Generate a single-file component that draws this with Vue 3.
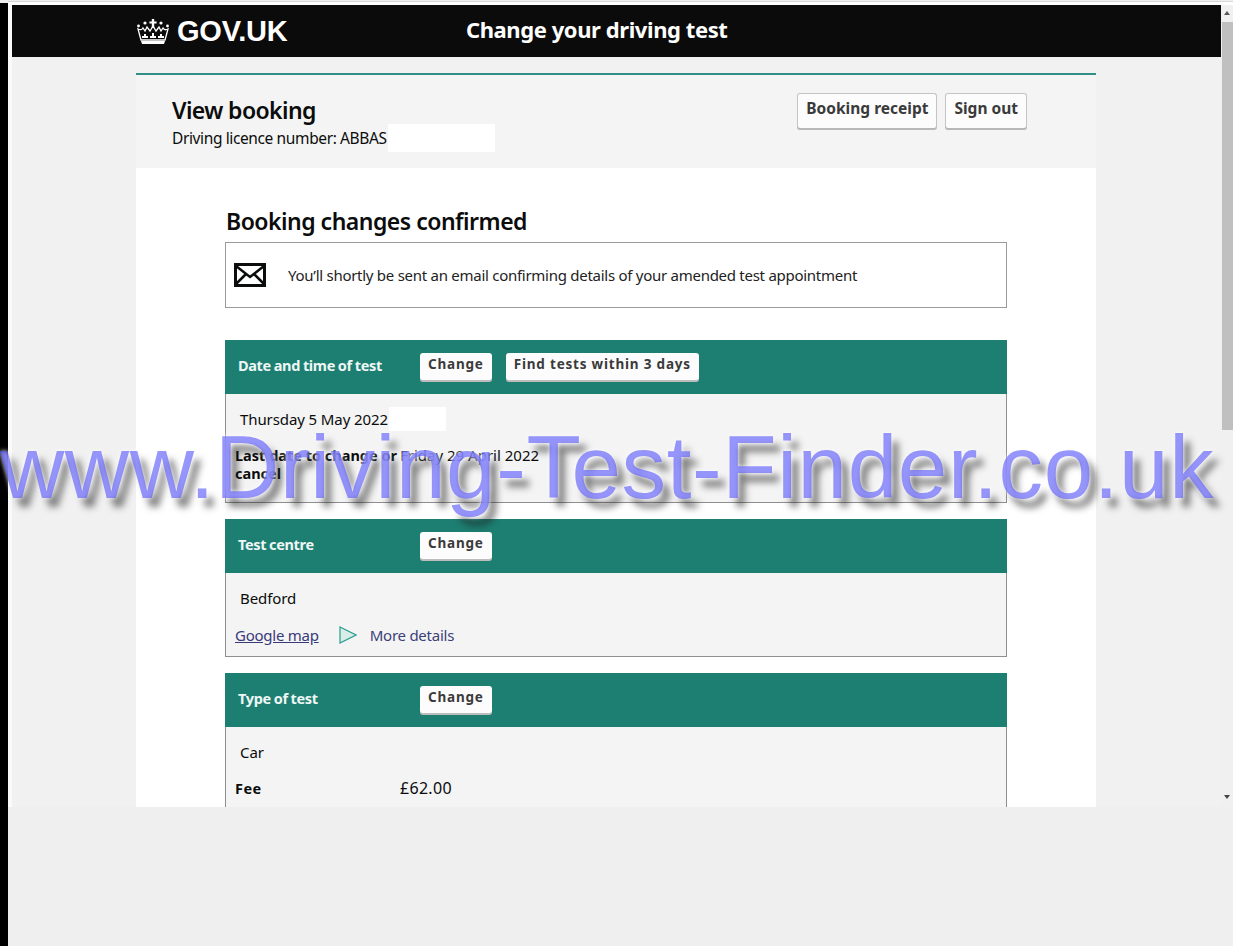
<template>
  <div class="screen">
    <div class="edge"></div>
    <div class="desk">
      <div class="window">
        <div class="page">
          <header class="topbar">
            <div class="brand">
              <svg class="crown" viewBox="0 0 34 26" width="34" height="26">
                <path d="M5 22 2 11c2 1 4 1 5-1l2 3 2-4 3 4 3-5 3 5 3-4 2 4 2-3c1 2 3 2 5 1l-3 11z" fill="none" stroke="#fff" stroke-width="1.3" />
                <path d="M5 23h24l-1 3H6z" fill="#fff" />
                <path d="M15.8 1h2.4v2.4h2.4v2.2h-2.4V10h-2.4V5.600h-2.400V3.400h2.400z" fill="#fff" />
                <path d="M8 16h2v2h2v2H6v-2h2zM16 15h2v3h2v2h-6v-2h2zM24 16h2v2h2v2h-6v-2h2z" fill="#fff" />
                <circle cx="9" cy="5" r="1.600" fill="#fff" />
                <circle cx="25" cy="5" r="1.600" fill="#fff" />
                <circle cx="2.500" cy="8" r="1.400" fill="#fff" />
                <circle cx="31.500" cy="8" r="1.400" fill="#fff" />
              </svg>
              <span class="logotype">GOV.UK</span>
            </div>
            <div class="service">Change your driving test</div>
          </header>

          <main class="wrap">
            <section class="summary">
              <div>
                <h1>View booking</h1>
                <div class="licence">Driving licence number: ABBAS<span class="mask mask-licence"></span></div>
              </div>
              <div class="actions">
                <button class="btn btn-big">Booking receipt</button>
                <button class="btn btn-big">Sign out</button>
              </div>
            </section>

            <section class="content">
              <h2>Booking changes confirmed</h2>
              <div class="notice">
                <svg class="mail" viewBox="0 0 32 24" width="32" height="24">
                  <rect x="1.500" y="1.500" width="29" height="21" fill="#fff" stroke="#0b0c0c" stroke-width="3" />
                  <path d="M2 3 16 14 30 3M2 21 12 11M30 21 20 11" fill="none" stroke="#0b0c0c" stroke-width="2.500" />
                </svg>
                <p>You’ll shortly be sent an email confirming details of your amended test appointment</p>
              </div>

              <div class="panel">
                <div class="panel-head">
                  <span class="panel-title">Date and time of test</span>
                  <button class="btn">Change</button>
                  <button class="btn">Find tests within 3 days</button>
                </div>
                <div class="panel-body">
                  <div class="value">Thursday 5 May 2022<span class="mask mask-time"></span></div>
                  <div class="row row-cancel">
                    <b>Last date to change or cancel</b>
                    <span>Friday 29 April 2022</span>
                  </div>
                </div>
              </div>

              <div class="panel">
                <div class="panel-head">
                  <span class="panel-title">Test centre</span>
                  <button class="btn">Change</button>
                </div>
                <div class="panel-body">
                  <div class="value">Bedford</div>
                  <div class="links">
                    <a class="map-link">Google map</a>
                    <svg class="arrow" viewBox="0 0 18 18" width="18" height="18">
                      <path d="M1 1 17 9 1 17z" fill="#d8ece8" stroke="#2a9d8f" stroke-width="1.200" />
                    </svg>
                    <span class="more">More details</span>
                  </div>
                </div>
              </div>

              <div class="panel">
                <div class="panel-head">
                  <span class="panel-title">Type of test</span>
                  <button class="btn">Change</button>
                </div>
                <div class="panel-body">
                  <div class="value">Car</div>
                  <div class="row row-fee">
                    <b>Fee</b>
                    <span>£62.00</span>
                  </div>
                </div>
              </div>
            </section>
          </main>
        </div>

        <div class="scrollbar">
          <span class="tri tri-up"></span>
          <div class="thumb"></div>
          <span class="tri tri-down"></span>
        </div>
      </div>
    </div>
    <div class="watermark">www.Driving-Test-Finder.co.uk</div>
  </div>
</template>

<script setup>
</script>

<style>
html, body { margin: 0; background: #efefef; overflow: hidden; }
</style>

<style scoped>
.screen {
  position: relative; display: flex; width: 1233px; height: 946px;
  overflow: hidden; background: #efefef;
  font-family: "Noto Sans", "Open Sans", sans-serif; color: #0b0c0c;
}
.edge { width: 8px; background: #000; margin-top: 3px; }
.desk { flex: 1; }
.window {
  display: flex; box-sizing: border-box; height: 806px; margin-top: 1px; padding-top: 3px;
  background: #fff; border-top: 1px solid #d8d8d8;
}
.page { flex: 1; min-width: 0; border-left: 4px solid #fafafa; background: #f1f1f1; overflow: hidden; }

.topbar { display: flex; align-items: center; height: 52px; padding-left: 124px; background: #0b0b0b; color: #fff; }
.brand { display: flex; align-items: center; width: 330px; }
.crown { margin-right: 7px; }
.logotype { font: 700 29px/1 "Liberation Sans", Arial, sans-serif; letter-spacing: -0.2px; }
.service { font: 700 22px/1 "Noto Sans", sans-serif; letter-spacing: -0.42px; margin-top: -5px; }

.wrap { width: 960px; margin: 16px 0 0 124px; }
.summary {
  display: flex; justify-content: space-between; height: 93px;
  border-top: 2px solid #2f8f88; background: #f4f4f4; padding-left: 36px; padding-right: 69px;
}
h1 { margin: 21px 0 0; font-size: 23px; line-height: 28px; font-weight: 600; letter-spacing: -0.6px; }
.licence { display: flex; font-size: 15.500px; line-height: 28px; letter-spacing: -0.38px; }
.mask { display: inline-block; background: #fff; }
.mask-licence { width: 107px; height: 28px; margin-left: 1px; }
.actions { display: flex; gap: 8px; margin-top: 18px; align-items: flex-start; }

.btn {
  height: 34px; padding: 0 8px; border: 0; border-radius: 3px; background: #fcfcfc;
  box-shadow: 0 2px 0 #bdbdbd; font: 700 13.500px/1 "Noto Sans", sans-serif;
  color: #3a3a3a; letter-spacing: 0.8px;
}
.btn-big {
  height: 35px; padding: 0 8px 5px; border: 1px solid #c4c4c4; border-bottom: 0;
  font-size: 15.500px; letter-spacing: 0;
  box-shadow: 0 2px 0 #b8b8b8;
}

.content { background: #fff; padding: 40px 89px 0; height: 640px; }
h2 { margin: -1px 0 7px 1px; font-size: 23px; line-height: 28px; font-weight: 600; letter-spacing: -0.5px; }
.notice { display: flex; align-items: center; height: 66px; box-sizing: border-box; border: 1px solid #9a9a9a; padding-left: 8px; margin-bottom: 32px; }
.mail { margin-right: 22px; }
.notice p { margin: 0; font-size: 15px; color: #222; letter-spacing: -0.27px; }

.panel { margin-bottom: 16px; }
.panel-head { display: flex; align-items: center; height: 54px; background: #1d7f72; padding-left: 13px; gap: 14px; }
.panel-title { width: 168px; margin-top: -4px; font-size: 14.500px; font-weight: 700; color: #eef7f5; letter-spacing: -0.35px; word-spacing: -0.5px; }
.panel-head .btn { height: 27px; padding: 0 8px 2px; margin-top: -2px; font-size: 13.500px; }
.panel-body { border: 1px solid #8f8f8f; border-top: 0; background: #f4f4f4; padding: 0 9px; }
.value { display: flex; align-items: center; height: 24px; padding: 13px 0 0 5px; font-size: 15px; letter-spacing: -0.1px; }
.mask-time { width: 57px; height: 24px; margin-left: 1px; }

.row { display: flex; font-size: 15px; line-height: 18px; }
.row b { width: 165px; flex: none; font-size: 14.500px; }
.row-cancel { padding-top: 15px; height: 56px; }
.row-fee { padding-top: 15px; height: 60px; }
.row-fee b { letter-spacing: 0.5px; }
.row-fee span { font-size: 16px; letter-spacing: 0.3px; }

.links { display: flex; align-items: center; padding: 15px 0 11px; height: 20px; font-size: 15px; letter-spacing: -0.25px; }
.map-link { color: #3a3a7a; text-decoration: underline; }
.arrow { margin: 0 13px 0 20px; }
.more { color: #3b3f78; }

.scrollbar { position: relative; width: 12px; background: #f0f0f0; }
.thumb { position: absolute; top: 17px; left: 1px; right: 0; height: 408px; background: #c0c0c0; }
.tri { position: absolute; left: 3px; width: 0; height: 0; border-left: 3px solid transparent; border-right: 3px solid transparent; }
.tri-up { top: 6px; border-bottom: 4px solid #555; }
.tri-down { bottom: 8px; border-top: 4px solid #444; }

.watermark {
  position: absolute; top: 423px; left: 0; white-space: nowrap;
  font: 400 89px/1 "Liberation Sans", Arial, sans-serif; letter-spacing: 0.6px;
  color: rgba(80, 80, 250, 0.6);
  text-shadow: 0 0 4px rgba(255,255,255,0.85), 7px 9px 7px rgba(30, 30, 30, 0.55);
}
</style>
